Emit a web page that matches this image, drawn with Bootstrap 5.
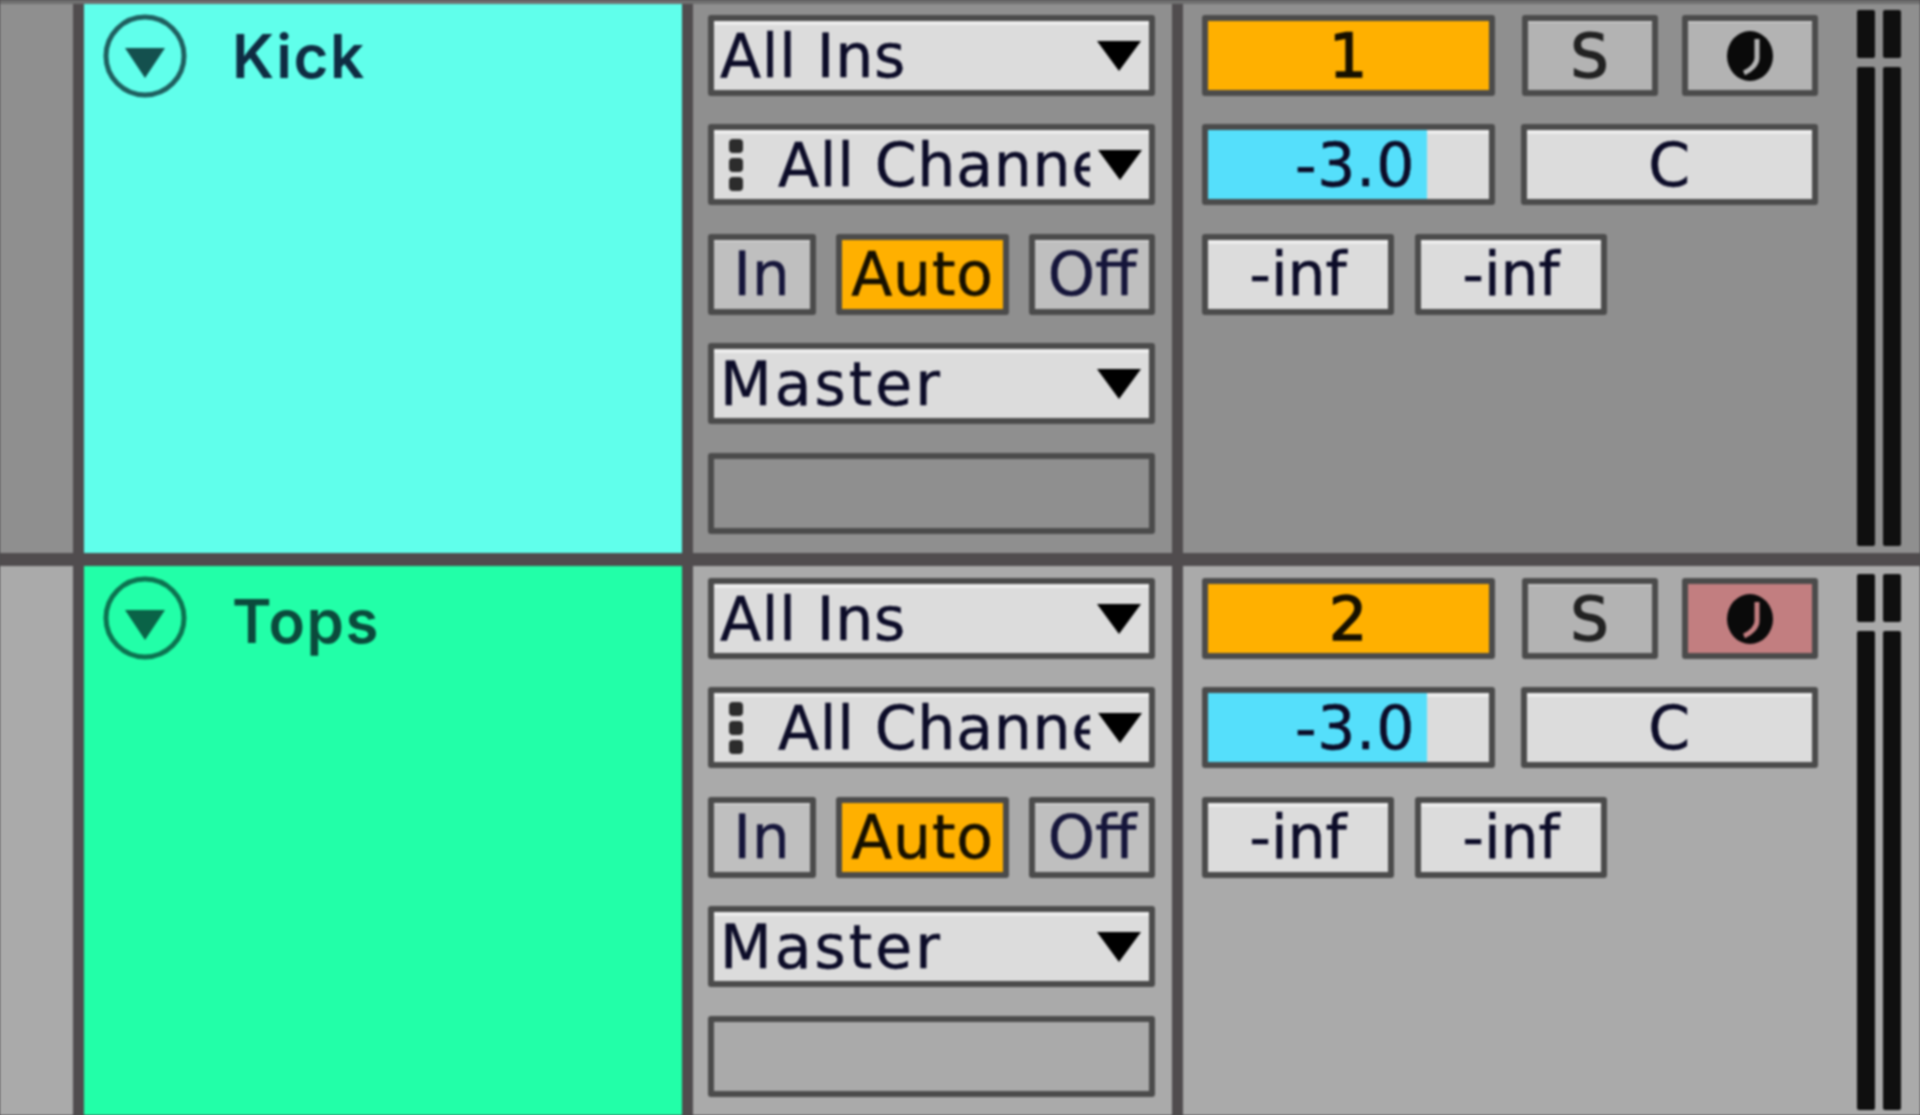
<!DOCTYPE html>
<html lang="en">
<head>
<meta charset="utf-8">
<title>Tracks</title>
<link href="https://cdn.jsdelivr.net/npm/bootstrap@5.3.0/dist/css/bootstrap.min.css" rel="stylesheet">
<style>
html,body{height:100%;overflow:hidden;background:#504c4e}
.lv-root{height:1115px;overflow:hidden;filter:blur(1.1px);border-top:4px solid #6f6f6f;font-family:"DejaVu Sans","Liberation Sans",sans-serif;color:#0c0c28}
.lv-track{height:549px;background:var(--tr);flex:none}
.lv-track+.lv-track{border-top:13px solid #504c4e;height:562px}
.lv-one{--tr:#8f8f8f;--sw:#60ffeb;--top:11px}
.lv-two{--tr:#aaaaaa;--sw:#22ffa8;--top:12px}
.lv-strip{width:73px;background:var(--tr);flex:none}
.lv-swatch{width:609px;background:var(--sw);border-left:11px solid #504c4e;flex:none;padding:10px 0 0 19px;gap:45px}
.lv-ring{width:84px;height:84px;flex:none}
.lv-name{font-family:Inter,"Liberation Sans",sans-serif;font-weight:600;font-size:60px;line-height:84px;color:#0f2c42;letter-spacing:1.5px}
.lv-two .lv-name{color:#0b4a3c;padding-top:3px}
.lv-ctl{width:490px;flex:none;border-left:11px solid #504c4e;padding:var(--top) 17px 0 15px;gap:28.4px}
.lv-mix{flex:1 1 0;border-left:11px solid #504c4e;padding:var(--top) 0 0 19px}
.lv-box{height:81px;border:6px solid #4b4b4b;border-radius:3px;background:#dcdcdc;font-size:60px;line-height:1;letter-spacing:.8px;-webkit-text-stroke:.5px currentColor;white-space:nowrap;flex:none;overflow:hidden;box-shadow:inset 0 4px 0 #ececec}
.lv-box.lv-sel{background:#ffb000;box-shadow:none;color:#161000}
.lv-box.lv-dim{background:#bfbfbf;box-shadow:inset 0 2px 0 #cfcfcf;color:#15153a}
.lv-box.lv-sq{background:#b3b3b3;box-shadow:inset 0 2px 0 #c4c4c4;color:#222}
.lv-box.lv-pk{background:#c27e80;box-shadow:none}
.lv-box.lv-void{background:var(--tr);box-shadow:none}
.lv-drop{padding:0 8px 0 6px}
.lv-tri{width:44px;height:30px;flex:none}
.lv-dots{width:16px;height:52px;flex:none;margin:0 34px 0 14px}
.lv-clip{overflow:hidden;width:312px;flex:none}
.lv-wide{letter-spacing:3px}
.lv-in{width:108px}.lv-auto{width:173px}.lv-off{width:126px;letter-spacing:0}
.lv-col{width:616px;flex:none;gap:28.4px}
.lv-num{width:293px;-webkit-text-stroke:1.5px currentColor}
.lv-s{width:136px;-webkit-text-stroke:1.5px currentColor}.lv-c{width:136px}
.lv-c2{width:297px}
.lv-vol{width:293px;background:#dcdcdc}
.lv-fill{background:#55dffb;height:100%;padding-right:12px}
.lv-infs{gap:21px}
.lv-inf{width:192px;letter-spacing:0}
.lv-clk{width:46px;height:50px}
.lv-meters{gap:8px;margin-left:39px;margin-top:-5px}
.lv-two .lv-meters{margin-top:-4px}
.lv-mbar{width:18px;gap:9px}
.lv-mbar i{display:block;background:#0f0f0f;border-radius:2px}
.lv-ma{height:48px;flex:none}
.lv-mb{height:479px;flex:none}
.lv-w{width:78%}
</style>
</head>
<body class="m-0">
<div class="lv-root d-flex flex-column">

  <section class="lv-track lv-one d-flex">
    <div class="lv-strip"></div>
    <div class="lv-swatch d-flex align-items-start">
      <svg class="lv-ring" viewBox="0 0 84 84"><circle cx="42" cy="42" r="39" fill="none" stroke="#1f5f5f" stroke-width="5"/><path d="M22 34h40L42 64z" fill="#14504e"/></svg>
      <div class="lv-name">Kick</div>
    </div>
    <div class="lv-ctl d-flex flex-column">
      <div class="lv-box lv-drop d-flex align-items-center justify-content-between">All Ins<svg class="lv-tri" viewBox="0 0 44 30"><path d="M0 0h44L22 30z" fill="#000"/></svg></div>
      <div class="lv-box d-flex align-items-center"><svg class="lv-dots" viewBox="0 0 16 52"><rect x="1" y="0" width="14" height="14" rx="4" fill="#2c2c2c"/><rect x="1" y="19" width="14" height="14" rx="4" fill="#2c2c2c"/><rect x="1" y="38" width="14" height="14" rx="4" fill="#2c2c2c"/></svg><div class="lv-clip">All Channels</div><svg class="lv-tri ms-2" viewBox="0 0 44 30"><path d="M0 0h44L22 30z" fill="#000"/></svg></div>
      <div class="d-flex justify-content-between">
        <div class="lv-box lv-dim lv-in d-flex align-items-center justify-content-center">In</div>
        <div class="lv-box lv-sel lv-auto d-flex align-items-center justify-content-center">Auto</div>
        <div class="lv-box lv-dim lv-off d-flex align-items-center justify-content-center">Off</div>
      </div>
      <div class="lv-box lv-drop d-flex align-items-center justify-content-between"><span class="lv-wide">Master</span><svg class="lv-tri" viewBox="0 0 44 30"><path d="M0 0h44L22 30z" fill="#000"/></svg></div>
      <div class="lv-box lv-void"></div>
    </div>
    <div class="lv-mix d-flex">
      <div class="lv-col d-flex flex-column">
        <div class="d-flex justify-content-between">
          <div class="lv-box lv-sel lv-num d-flex align-items-center justify-content-center">1</div>
          <div class="d-flex gap-4">
            <div class="lv-box lv-sq lv-s d-flex align-items-center justify-content-center">S</div>
            <div class="lv-box lv-sq lv-c d-flex align-items-center justify-content-center"><svg class="lv-clk" viewBox="0 0 46 50"><ellipse cx="23" cy="25" rx="23" ry="25" fill="#0a0a0a"/><path d="M30 8v19c0 6-6 12-13 15" fill="none" stroke="#b3b3b3" stroke-width="5"/></svg></div>
          </div>
        </div>
        <div class="d-flex justify-content-between">
          <div class="lv-box lv-vol"><div class="lv-fill d-flex align-items-center justify-content-end lv-w">-3.0</div></div>
          <div class="lv-box lv-c2 d-flex align-items-center justify-content-center">C</div>
        </div>
        <div class="d-flex lv-infs">
          <div class="lv-box lv-inf d-flex align-items-center justify-content-center">-inf</div>
          <div class="lv-box lv-inf d-flex align-items-center justify-content-center">-inf</div>
        </div>
      </div>
      <div class="lv-meters d-flex">
        <div class="lv-mbar d-flex flex-column"><i class="lv-ma"></i><i class="lv-mb"></i></div>
        <div class="lv-mbar d-flex flex-column"><i class="lv-ma"></i><i class="lv-mb"></i></div>
      </div>
    </div>
  </section>

  <section class="lv-track lv-two d-flex">
    <div class="lv-strip"></div>
    <div class="lv-swatch d-flex align-items-start">
      <svg class="lv-ring" viewBox="0 0 84 84"><circle cx="42" cy="42" r="39" fill="none" stroke="#0c7350" stroke-width="5"/><path d="M22 34h40L42 64z" fill="#0a6347"/></svg>
      <div class="lv-name">Tops</div>
    </div>
    <div class="lv-ctl d-flex flex-column">
      <div class="lv-box lv-drop d-flex align-items-center justify-content-between">All Ins<svg class="lv-tri" viewBox="0 0 44 30"><path d="M0 0h44L22 30z" fill="#000"/></svg></div>
      <div class="lv-box d-flex align-items-center"><svg class="lv-dots" viewBox="0 0 16 52"><rect x="1" y="0" width="14" height="14" rx="4" fill="#2c2c2c"/><rect x="1" y="19" width="14" height="14" rx="4" fill="#2c2c2c"/><rect x="1" y="38" width="14" height="14" rx="4" fill="#2c2c2c"/></svg><div class="lv-clip">All Channels</div><svg class="lv-tri ms-2" viewBox="0 0 44 30"><path d="M0 0h44L22 30z" fill="#000"/></svg></div>
      <div class="d-flex justify-content-between">
        <div class="lv-box lv-dim lv-in d-flex align-items-center justify-content-center">In</div>
        <div class="lv-box lv-sel lv-auto d-flex align-items-center justify-content-center">Auto</div>
        <div class="lv-box lv-dim lv-off d-flex align-items-center justify-content-center">Off</div>
      </div>
      <div class="lv-box lv-drop d-flex align-items-center justify-content-between"><span class="lv-wide">Master</span><svg class="lv-tri" viewBox="0 0 44 30"><path d="M0 0h44L22 30z" fill="#000"/></svg></div>
      <div class="lv-box lv-void"></div>
    </div>
    <div class="lv-mix d-flex">
      <div class="lv-col d-flex flex-column">
        <div class="d-flex justify-content-between">
          <div class="lv-box lv-sel lv-num d-flex align-items-center justify-content-center">2</div>
          <div class="d-flex gap-4">
            <div class="lv-box lv-sq lv-s d-flex align-items-center justify-content-center">S</div>
            <div class="lv-box lv-pk lv-c d-flex align-items-center justify-content-center"><svg class="lv-clk" viewBox="0 0 46 50"><ellipse cx="23" cy="25" rx="23" ry="25" fill="#0a0a0a"/><path d="M30 8v19c0 6-6 12-13 15" fill="none" stroke="#c27e80" stroke-width="5"/></svg></div>
          </div>
        </div>
        <div class="d-flex justify-content-between">
          <div class="lv-box lv-vol"><div class="lv-fill d-flex align-items-center justify-content-end lv-w">-3.0</div></div>
          <div class="lv-box lv-c2 d-flex align-items-center justify-content-center">C</div>
        </div>
        <div class="d-flex lv-infs">
          <div class="lv-box lv-inf d-flex align-items-center justify-content-center">-inf</div>
          <div class="lv-box lv-inf d-flex align-items-center justify-content-center">-inf</div>
        </div>
      </div>
      <div class="lv-meters d-flex">
        <div class="lv-mbar d-flex flex-column"><i class="lv-ma"></i><i class="lv-mb"></i></div>
        <div class="lv-mbar d-flex flex-column"><i class="lv-ma"></i><i class="lv-mb"></i></div>
      </div>
    </div>
  </section>

</div>
<script src="https://cdn.jsdelivr.net/npm/bootstrap@5.3.0/dist/js/bootstrap.bundle.min.js"></script>
</body>
</html>
